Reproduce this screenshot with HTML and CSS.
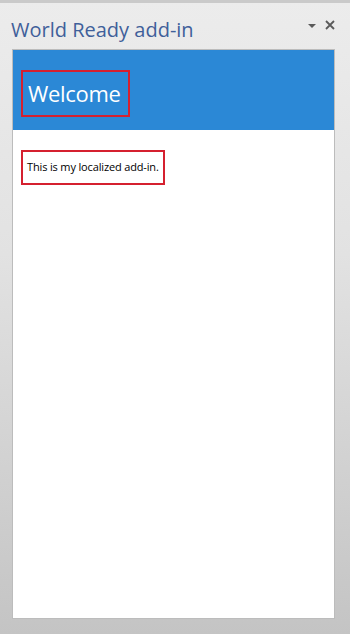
FILE: index.html
```html
<!DOCTYPE html>
<html>
<head>
<meta charset="utf-8">
<link rel="stylesheet" href="styles.css">
</head>
<body>
<div class="app">
  <div class="topstrip"></div>
  <div class="titlebar">
    <div class="title">World Ready add-in</div>
    <div class="controls">
      <svg class="drop" width="8" height="4" viewBox="0 0 8 4"><path d="M0 0 H8 L4 4 Z" fill="#5a5a5a"/></svg>
      <svg class="close" width="10" height="10" viewBox="0 0 10 10"><path d="M1 1 L9 9 M9 1 L1 9" stroke="#5a5a5a" stroke-width="1.8"/></svg>
    </div>
  </div>
  <div class="panel">
    <div class="header">
      <div class="welcome-box"><span class="welcome">Welcome</span></div>
    </div>
    <div class="content">
      <div class="msg-box">This is my localized add-in.</div>
    </div>
  </div>
</div>
</body>
</html>
```
FILE: styles.css
```css
html, body {
  margin: 0;
  padding: 0;
  height: 100%;
}
body {
  font-family: "Open Sans", "Noto Sans", sans-serif;
  background: linear-gradient(to bottom, #ececec 0%, #e2e2e2 40%, #c4c4c4 100%);
}
.app {
  display: flex;
  flex-direction: column;
  height: 634px;
}
.topstrip {
  height: 3px;
  background: #cacaca;
}
.titlebar {
  height: 46px;
  display: flex;
  align-items: flex-start;
  justify-content: space-between;
  padding: 0 15px 0 11px;
}
.title {
  font-size: 20px;
  color: #3f5f9a;
  margin-top: 14px;
  line-height: 26px;
  letter-spacing: 0;
}
.controls {
  display: flex;
  align-items: center;
  gap: 9px;
  margin-top: 17px;
}
.drop { display: block; margin-top: 1px; }
.close { display: block; }
.panel {
  flex: 1;
  margin: 0 15px 15px 12px;
  background: #fff;
  border: 1px solid #bcbcbc;
  display: flex;
  flex-direction: column;
}
.header {
  height: 80px;
  background: #2b88d6;
  padding: 20px 0 0 8px;
  box-sizing: border-box;
}
.welcome-box {
  display: inline-block;
  border: 2px solid #d5202f;
  width: 109px;
  height: 47px;
  box-sizing: border-box;
  padding: 6px 0 0 5px;
}
.welcome {
  color: #fff;
  font-size: 22px;
  line-height: 30px;
  letter-spacing: -0.3px;
}
.content {
  padding: 20px 0 0 8px;
}
.msg-box {
  display: inline-block;
  border: 2px solid #d5202f;
  width: 144px;
  height: 35px;
  box-sizing: border-box;
  padding: 7px 0 0 4px;
  font-size: 11px;
  line-height: 16px;
  color: #000;
  letter-spacing: -0.15px;
}
```
